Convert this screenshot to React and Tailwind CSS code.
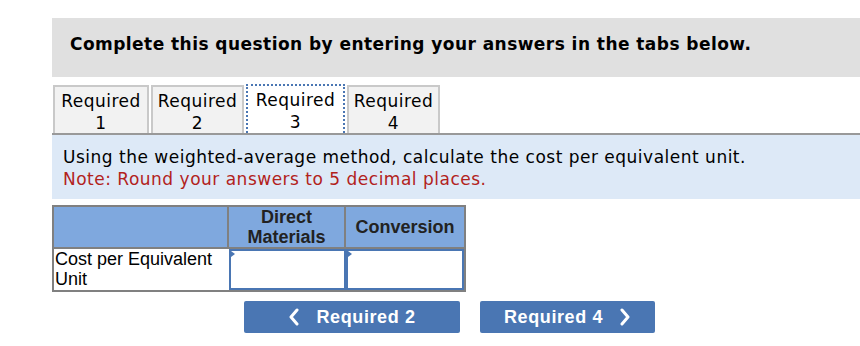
const tabs = [
  { label: "1", w: "w-[96px]" },
  { label: "2", w: "w-[93px]" },
  { label: "3", w: "w-[99px]", active: true },
  { label: "4", w: "w-[93px]" },
];

function Chevron({ dir }) {
  const d = dir === "left" ? "M9 2 L3 9 L9 16" : "M3 2 L9 9 L3 16";
  return (
    <svg width="12" height="18" viewBox="0 0 12 18" fill="none">
      <path d={d} stroke="white" strokeWidth="3" strokeLinecap="round" strokeLinejoin="round" />
    </svg>
  );
}

function AnswerCell({ w }) {
  return (
    <div className={`relative h-[41px] ${w} border-2 border-[#4a76b3] bg-white`}>
      <div className="absolute left-0 top-0 h-0 w-0 border-y-[3px] border-l-[4px] border-y-transparent border-l-[#4a76b3]" />
    </div>
  );
}

export default function App() {
  return (
    <div className="h-[346px] w-[860px] overflow-hidden bg-white pt-[18px] pl-[52px] font-['DejaVu_Sans',Verdana,sans-serif]">
      <div className="flex h-[59px] items-center bg-[#e0e0e0] pb-[6px] pl-[18px]">
        <h1 className="text-[17px] font-bold tracking-[0.45px] text-black">
          Complete this question by entering your answers in the tabs below.
        </h1>
      </div>

      <div className="mt-[7px] flex items-end gap-[2px] pl-[1px]">
        {tabs.map((tab) => (
          <div
            key={tab.label}
            className={
              tab.active
                ? `${tab.w} h-[49px] border-2 border-b-0 border-dotted border-[#4a76b3] bg-white pt-[3px] text-center text-[17px] leading-[22px] tracking-[0.5px] text-black`
                : `${tab.w} h-[48px] border-2 border-b-0 border-[#c9c9c9] bg-[#f2f2f2] pt-[3px] text-center text-[17px] leading-[22px] tracking-[0.5px] text-black`
            }
          >
            Required
            <br />
            {tab.label}
          </div>
        ))}
      </div>

      <div className="border-t-2 border-[#999999] bg-[#dde9f7] px-[11px] pt-[11px] pb-[9px] text-[17px] leading-[22px] tracking-[0.5px]">
        <p className="text-black">
          Using the weighted-average method, calculate the cost per equivalent unit.
        </p>
        <p className="text-[#b2221c]">Note: Round your answers to 5 decimal places.</p>
      </div>

      <div className="mt-[6px] w-[414px] border-2 border-[#808080] font-['Liberation_Sans',Arial,sans-serif]">
        <div className="flex h-[40px] bg-[#7fa8de]">
          <div className="w-[175px] border-r-2 border-[#808080]" />
          <div className="flex w-[117px] items-center justify-center border-r-2 border-[#808080] text-center text-[18px] font-bold leading-[20px] text-[#222]">
            Direct
            <br />
            Materials
          </div>
          <div className="flex flex-1 items-center justify-center text-[18px] font-bold text-[#222]">
            Conversion
          </div>
        </div>
        <div className="flex border-t-2 border-[#808080] bg-white">
          <div className="w-[175px] pl-[1px] text-[18px] leading-[20px] text-black">
            Cost per Equivalent
            <br />
            Unit
          </div>
          <AnswerCell w="w-[117px]" />
          <AnswerCell w="flex-1" />
        </div>
      </div>

      <div className="mt-[9px] flex gap-[20px] pl-[192px] font-['Liberation_Sans',Arial,sans-serif]">
        <button className="flex h-[32px] w-[216px] items-center justify-center gap-[16px] rounded-[2px] bg-[#4a76b3] text-[18px] font-bold tracking-[0.6px] text-white">
          <Chevron dir="left" />
          Required 2
        </button>
        <button className="flex h-[32px] w-[175px] items-center justify-center gap-[16px] rounded-[2px] bg-[#4a76b3] text-[18px] font-bold tracking-[0.6px] text-white">
          Required 4
          <Chevron dir="right" />
        </button>
      </div>
    </div>
  );
}
